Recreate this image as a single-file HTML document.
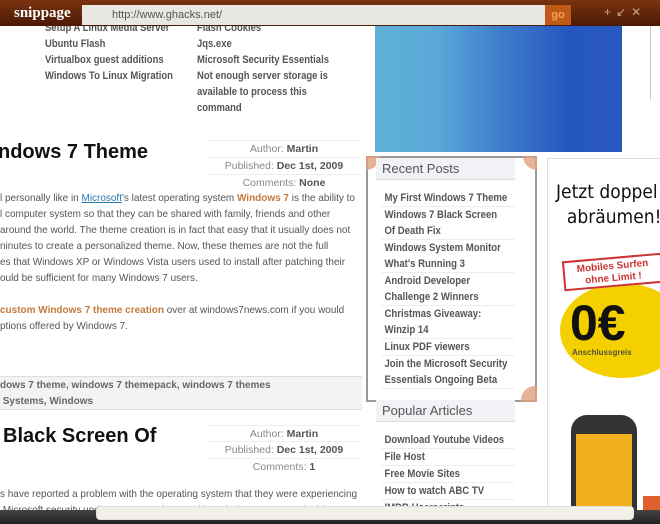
<!DOCTYPE html>
<html><head><meta charset="utf-8"><style>
*{margin:0;padding:0;box-sizing:border-box}
body{width:660px;height:524px;overflow:hidden;background:#fff;font-family:"Liberation Sans",sans-serif;position:relative;color:#555}
.a{position:absolute}
.lk{font-size:11px;font-weight:bold;color:#555;line-height:16px;transform:scaleX(0.86);transform-origin:left top;white-space:nowrap}
.meta{font-size:10.5px;color:#888;text-align:center;line-height:16px;border-top:1px solid #eee}
.meta b{color:#555}
.p{font-size:10.5px;color:#555;line-height:16px;white-space:nowrap;transform:scaleX(0.95);transform-origin:left top}
.or{color:#c47a3a;font-weight:bold}
.side{transform:scaleX(0.87);transform-origin:left top}
.side div{font-size:11px;font-weight:bold;color:#555;line-height:16px;padding-left:4px;border-bottom:1px solid #eee;white-space:nowrap;width:154px}
.side div.n{border-bottom:none}
</style></head><body>
<!-- top links -->
<div class="a lk" style="left:45px;top:20px">Setup A Linux Media Server<br>Ubuntu Flash<br>Virtualbox guest additions<br>Windows To Linux Migration</div>
<div class="a lk" style="left:197px;top:20px">Flash Cookies<br>Jqs.exe<br>Microsoft Security Essentials<br>Not enough server storage is<br>available to process this<br>command</div>
<!-- top bar -->
<div class="a" style="left:0;top:0;width:660px;height:26px;background:linear-gradient(#7a3410,#4a1a06);z-index:1"></div>
<div class="a" style="left:82px;top:5px;width:464px;height:20px;background:#e9e7e1;z-index:2"></div>
<div class="a" style="left:112px;top:9px;font-size:11px;color:#555;z-index:3">http://www.ghacks.net/</div>
<div class="a" style="left:14px;top:5px;font-family:'Liberation Serif',serif;font-size:15px;color:#fff;font-weight:bold;z-index:3">snippage</div>
<div class="a" style="left:545px;top:5px;width:26px;height:20px;background:#c05a18;color:#f7a050;font-size:11px;text-align:center;line-height:20px;font-weight:bold;z-index:3">go</div>
<div class="a" style="left:604px;top:5px;color:#c8a890;font-size:12px;letter-spacing:5px;z-index:3">+↙✕</div>
<!-- blue image -->
<div class="a" style="left:375px;top:25px;width:247px;height:127px;background:linear-gradient(90deg,#5fb1d9 0%,#5aa8d8 25%,#3f7fcc 50%,#2555c0 80%,#2a5ac0 100%)"></div>
<div class="a" style="left:650px;top:25px;width:10px;height:75px;border-left:1px solid #ccc"></div>
<!-- article 1 -->
<div class="a" style="left:-2px;top:141px;font-size:20px;font-weight:bold;color:#111">ndows 7 Theme</div>
<div class="a meta" style="left:208px;top:140px;width:152px">Author: <b>Martin</b></div>
<div class="a meta" style="left:208px;top:157px;width:152px">Published: <b>Dec 1st, 2009</b></div>
<div class="a meta" style="left:208px;top:174px;width:152px">Comments: <b>None</b></div>
<div class="a p" style="left:0;top:190px">l personally like in <span style="color:#2a7ab0;text-decoration:underline">Microsoft</span>'s latest operating system <span class="or">Windows 7</span> is the ability to<br>l computer system so that they can be shared with family, friends and other<br>around the world. The theme creation is in fact that easy that it usually does not<br>ninutes to create a personalized theme. Now, these themes are not the full<br>es that Windows XP or Windows Vista users used to install after patching their<br>ould be sufficient for many Windows 7 users.<br><br><span class="or">custom Windows 7 theme creation</span> over at windows7news.com if you would<br>ptions offered by Windows 7.</div>
<div class="a" style="left:0;top:376px;width:362px;height:34px;background:#f3f3f5;border-top:1px solid #ddd;border-bottom:1px solid #ddd"></div>
<div class="a p" style="left:0;top:377px;font-weight:bold;color:#666">dows 7 theme, windows 7 themepack, windows 7 themes<br>&nbsp;Systems, Windows</div>
<!-- article 2 -->
<div class="a" style="left:3px;top:425px;font-size:20px;font-weight:bold;color:#111">Black Screen Of</div>
<div class="a meta" style="left:208px;top:425px;width:152px">Author: <b>Martin</b></div>
<div class="a meta" style="left:208px;top:441px;width:152px">Published: <b>Dec 1st, 2009</b></div>
<div class="a meta" style="left:208px;top:458px;width:152px">Comments: <b>1</b></div>
<div class="a p" style="left:0;top:486px">s have reported a problem with the operating system that they were experiencing<br>&nbsp;Microsoft security update on November 25 although there are some incidents</div>
<!-- recent posts box -->
<div class="a" style="left:366px;top:156px;width:171px;height:246px;border:2px solid #999;background:#fff"></div>
<div class="a" style="left:366px;top:156px;width:14px;height:14px;background:#e0a080;border-radius:0 0 14px 0;opacity:.8"></div>
<div class="a" style="left:523px;top:156px;width:14px;height:14px;background:#e0a080;border-radius:0 0 0 14px;opacity:.8"></div>
<div class="a" style="left:521px;top:386px;width:16px;height:16px;background:#e0a080;border-radius:14px 0 0 0;opacity:.8"></div>
<div class="a" style="left:376px;top:158px;width:139px;height:22px;background:#f2f2f6;border-bottom:1px solid #ddd;font-size:13px;color:#555;padding-left:6px;line-height:21px">Recent Posts</div>
<div class="a side" style="left:381px;top:190px"><div>My First Windows 7 Theme</div><div class="n">Windows 7 Black Screen</div><div>Of Death Fix</div><div class="n">Windows System Monitor</div><div>What's Running 3</div><div class="n">Android Developer</div><div>Challenge 2 Winners</div><div class="n">Christmas Giveaway:</div><div>Winzip 14</div><div>Linux PDF viewers</div><div class="n">Join the Microsoft Security</div><div>Essentials Ongoing Beta</div></div>
<div class="a" style="left:376px;top:400px;width:139px;height:22px;background:#f2f2f6;border-bottom:1px solid #ddd;font-size:13px;color:#555;padding-left:6px;line-height:21px">Popular Articles</div>
<div class="a side" style="left:381px;top:432px"><div>Download Youtube Videos</div><div>File Host</div><div>Free Movie Sites</div><div>How to watch ABC TV</div><div>IMDB Userscripts</div></div>
<!-- ad -->
<div class="a" style="left:547px;top:158px;width:113px;height:360px;border-left:1px solid #ddd;border-top:1px solid #ddd"></div>
<div class="a" style="left:556px;top:180px;font-size:19px;color:#111;white-space:nowrap;line-height:25px;font-family:'DejaVu Sans',sans-serif;transform:scaleX(0.9);transform-origin:left top">Jetzt doppel<br>&nbsp;&nbsp;abräumen!</div>
<div class="a" style="left:560px;top:283px;width:125px;height:95px;border-radius:50%;background:#f5d000"></div>
<div class="a" style="left:563px;top:257px;width:100px;height:30px;border:2px solid #c33;background:#fff;transform:rotate(-5deg);font-size:10px;color:#c33;font-weight:bold;text-align:center;line-height:12px;padding-top:2px">Mobiles Surfen<br>ohne Limit !</div>
<div class="a" style="left:570px;top:298px;font-size:50px;font-weight:bold;color:#111;line-height:50px">0€</div>
<div class="a" style="left:572px;top:348px;font-size:8px;font-weight:bold;color:#553;white-space:nowrap">Anschlussgreis</div>
<div class="a" style="left:571px;top:415px;width:66px;height:100px;background:#333;border-radius:16px 16px 4px 4px"></div>
<div class="a" style="left:576px;top:434px;width:56px;height:75px;background:#f0b020"></div>
<div class="a" style="left:643px;top:496px;width:17px;height:20px;background:#e06030"></div>
<!-- bottom bar -->
<div class="a" style="left:0;top:510px;width:660px;height:14px;background:linear-gradient(#444,#222)"></div>
<div class="a" style="left:96px;top:506px;width:538px;height:14px;background:#f2f0e8;border-radius:4px;border:1px solid #ddd"></div>
</body></html>
